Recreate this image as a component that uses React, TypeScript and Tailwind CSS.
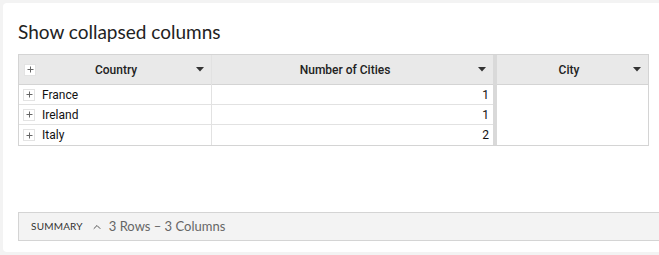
import { ChevronUp } from "lucide-react";

const rows = [
  { country: "France", cities: 1 },
  { country: "Ireland", cities: 1 },
  { country: "Italy", cities: 2 },
];

function PlusBox() {
  return (
    <div className="flex items-center justify-center w-[12px] h-[12px] bg-white border border-[#e3e3e3]">
      <svg width="7" height="7" viewBox="0 0 7 7">
        <path d="M3.5 0.5v6M0.5 3.5h6" stroke="#666" strokeWidth="1" />
      </svg>
    </div>
  );
}

function Caret() {
  return (
    <svg width="8" height="5" viewBox="0 0 8 5" className="shrink-0">
      <path d="M0 0h8L4 4.5z" fill="#333" />
    </svg>
  );
}

export default function App() {
  return (
    <div className="h-[255px] w-[659px] bg-[#f3f3f3] pt-[3px] pl-[3px] overflow-hidden font-['Roboto',sans-serif]">
      <div className="h-[249px] bg-white rounded-l-[4px] pl-[15px] flex flex-col">
        <h1 className="font-['Lato',sans-serif] text-[19px] text-[#222] pt-[15px] leading-[28px] h-[51px]">
          Show collapsed columns
        </h1>

        <div className="flex w-[631px] border border-[#d4d4d4] text-[12px] text-[#111]">
          {/* Country column */}
          <div className="w-[193px] border-r border-[#e2e2e2]">
            <div className="h-[30px] bg-[#e9e9e9] border-b border-[#d4d4d4] flex items-center pl-[5px] pr-[7px]">
              <PlusBox />
              <span className="flex-1 text-center font-medium text-[#222]">Country</span>
              <Caret />
            </div>
            {rows.map((r, i) => (
              <div
                key={r.country}
                className={`h-[20px] flex items-center gap-[7px] pl-[4px] ${i < 2 ? "border-b border-[#e2e2e2]" : ""}`}
              >
                <PlusBox />
                <span>{r.country}</span>
              </div>
            ))}
          </div>

          {/* Number of cities column */}
          <div className="w-[281px]">
            <div className="h-[30px] bg-[#e9e9e9] border-b border-[#d4d4d4] flex items-center pr-[7px]">
              <span className="flex-1 text-center font-medium text-[#222]">Number of Cities</span>
              <Caret />
            </div>
            {rows.map((r, i) => (
              <div
                key={r.country}
                className={`h-[20px] flex items-center justify-end pr-[4px] ${i < 2 ? "border-b border-[#e2e2e2]" : ""}`}
              >
                {r.cities}
              </div>
            ))}
          </div>

          <div className="w-[4px] bg-[#d9d9d9]" />

          {/* City column */}
          <div className="flex-1">
            <div className="h-[30px] bg-[#e9e9e9] border-b border-[#d4d4d4] flex items-center pr-[7px]">
              <span className="flex-1 text-center font-medium text-[#222] pl-[8px]">City</span>
              <Caret />
            </div>
          </div>
        </div>

        <div className="mt-[66px] h-[29px] bg-[#f3f3f3] border-y border-l border-[#d4d4d4] flex items-center pl-[12px] font-['Lato',sans-serif]">
          <span className="text-[10px] text-[#333] tracking-[0.2px]">SUMMARY</span>
          <ChevronUp size={12} strokeWidth={2} className="ml-[8px] text-[#555]" />
          <span className="ml-[6px] text-[13px] text-[#666]">3 Rows – 3 Columns</span>
        </div>
      </div>
    </div>
  );
}
